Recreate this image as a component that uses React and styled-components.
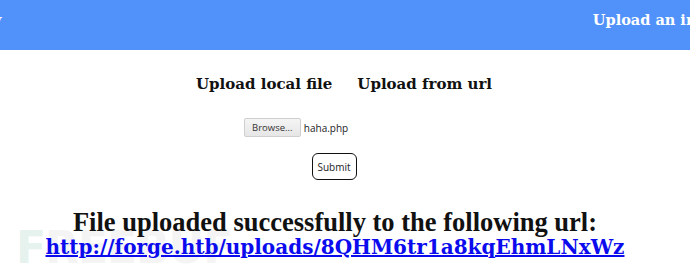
import React from "react";
import styled, { createGlobalStyle } from "styled-components";

const Global = createGlobalStyle`
  html, body { margin: 0; padding: 0; background: #fff; overflow: hidden; }
  body { width: 690px; height: 276px; }
`;

const Page = styled.div`
  position: relative;
  width: 690px;
  height: 276px;
  overflow: hidden;
`;

const NavBar = styled.header`
  height: 50px;
  background: #5191fa;
  display: flex;
  align-items: center;
  justify-content: space-between;
  white-space: nowrap;
  overflow: hidden;
`;

const NavText = styled.span`
  font-family: "DejaVu Serif", serif;
  font-weight: bold;
  font-size: 14.5px;
  color: #fff;
  margin: ${(p) => p.$margin};
  padding-bottom: 12px;
`;

const Tabs = styled.div`
  display: flex;
  justify-content: center;
  gap: 25px;
  margin-top: 25px;
  padding-right: 2px;
`;

const Tab = styled.h3`
  margin: 0;
  font-family: "DejaVu Serif", serif;
  font-weight: bold;
  font-size: 15px;
  color: #111;
`;

const FileRow = styled.div`
  display: flex;
  align-items: center;
  justify-content: center;
  gap: 3px;
  margin-top: 25px;
  padding-right: 98px;
`;

const Browse = styled.button`
  width: 57px;
  height: 19px;
  padding: 0;
  font-family: "Open Sans", sans-serif;
  font-size: 9.5px;
  color: #333;
  background: linear-gradient(#f5f5f5, #e6e6e6);
  border: 1px solid #cfcfcf;
  border-radius: 2px;
`;

const FileName = styled.span`
  font-family: "Open Sans", sans-serif;
  font-size: 10px;
  color: #222;
`;

const SubmitRow = styled.div`
  display: flex;
  justify-content: center;
  margin-top: 16px;
  padding-right: 22px;
`;

const Submit = styled.button`
  width: 45px;
  height: 27px;
  padding: 0;
  font-family: "Open Sans", sans-serif;
  font-size: 10px;
  color: #222;
  background: #fff;
  border: 1.5px solid #111;
  border-radius: 6px;
`;

const Result = styled.div`
  display: flex;
  flex-direction: column;
  align-items: center;
  margin-top: 30px;
  padding-right: 20px;
  position: relative;
  z-index: 1;
`;

const ResultTitle = styled.h2`
  margin: 0;
  font-family: "Liberation Serif", serif;
  font-weight: bold;
  font-size: 26.5px;
  line-height: 24px;
  color: #111;
`;

const ResultLink = styled.a`
  font-family: "DejaVu Serif", serif;
  font-weight: bold;
  font-size: 20px;
  line-height: 26px;
  color: #0b0bee;
  text-decoration: underline;
  text-decoration-thickness: 2px;
`;

const Watermark = styled.div`
  position: absolute;
  left: 16px;
  top: 226px;
  font-family: "DejaVu Sans", sans-serif;
  font-weight: bold;
  font-size: 44px;
  line-height: 44px;
  letter-spacing: -1px;
  color: #f4f4f4;
  z-index: 0;
  span { color: #e6f2ed; }
`;

export default function App() {
  return (
    <Page>
      <Global />
      <NavBar>
        <NavText $margin="0 0 0 -7px">y</NavText>
        <NavText $margin="0 -40px 0 0">Upload an image</NavText>
      </NavBar>
      <Tabs>
        <Tab>Upload local file</Tab>
        <Tab>Upload from url</Tab>
      </Tabs>
      <FileRow>
        <Browse>Browse...</Browse>
        <FileName>haha.php</FileName>
      </FileRow>
      <SubmitRow>
        <Submit>Submit</Submit>
      </SubmitRow>
      <Watermark><span>F</span>REEBUF</Watermark>
      <Result>
        <ResultTitle>File uploaded successfully to the following url:</ResultTitle>
        <ResultLink href="#">http://forge.htb/uploads/8QHM6tr1a8kqEhmLNxWz</ResultLink>
      </Result>
    </Page>
  );
}
